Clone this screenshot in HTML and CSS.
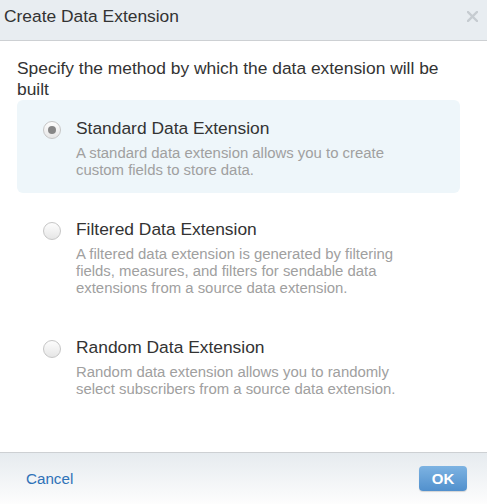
FILE: index.html
```html
<!DOCTYPE html>
<html lang="en">
<head>
    <meta charset="UTF-8">
    <meta name="viewport" content="width=device-width, initial-scale=1.0">
    <title>Create Data Extension</title>
    <link rel="stylesheet" href="styles.css">
</head>
<body>
    <div class="modal">
        <div class="modal-header">
            <h1 class="modal-title">Create Data Extension</h1>
            <span class="close">
                <svg width="11" height="11" viewBox="0 0 11 11">
                    <path d="M1 1 L10 10 M10 1 L1 10" stroke="#c6ccd1" stroke-width="2.4" stroke-linecap="square" fill="none"/>
                </svg>
            </span>
        </div>

        <div class="modal-body">
            <p class="intro">Specify the method by which the data extension will be built</p>

            <!-- Options -->
            <label class="option selected">
                <input type="radio" name="method" value="standard" checked>
                <span class="option-text">
                    <span class="option-label">Standard Data Extension</span>
                    <span class="option-desc">A standard data extension allows you to create custom fields to store data.</span>
                </span>
            </label>

            <label class="option">
                <input type="radio" name="method" value="filtered">
                <span class="option-text">
                    <span class="option-label">Filtered Data Extension</span>
                    <span class="option-desc">A filtered data extension is generated by filtering fields, measures, and filters for sendable data extensions from a source data extension.</span>
                </span>
            </label>

            <label class="option">
                <input type="radio" name="method" value="random">
                <span class="option-text">
                    <span class="option-label">Random Data Extension</span>
                    <span class="option-desc">Random data extension allows you to randomly select subscribers from a source data extension.</span>
                </span>
            </label>
        </div>

        <div class="modal-footer">
            <a class="cancel" href="#">Cancel</a>
            <button class="btn-ok">OK</button>
        </div>
    </div>
</body>
</html>
```

FILE: styles.css
```css
body {
    margin: 0;
    font-family: "Liberation Sans", Arial, sans-serif;
    background: #fff;
    color: #333;
}
.modal {
    width: 487px;
    height: 504px;
    display: flex;
    flex-direction: column;
}
.modal-header {
    height: 36px;
    padding: 4px 9px 0 4px;
    background: #e8edf1;
    border-bottom: 1px solid #cdd0d3;
    display: flex;
    justify-content: space-between;
    align-items: flex-start;
}
.modal-title {
    margin: 0;
    font-size: 17.4px;
    font-weight: normal;
    line-height: 24px;
    color: #333;
}
.close {
    margin-top: 7px;
    width: 11px;
    height: 11px;
    display: block;
}
.close svg {
    display: block;
}
.modal-body {
    flex: 1;
    padding: 17px 27px 0 17px;
}
.intro {
    margin: 0;
    font-size: 17.4px;
    line-height: 21px;
    color: #333;
}
.option {
    display: grid;
    grid-template-columns: 18px 1fr;
    column-gap: 15px;
    padding: 18px 50px 14px 26px;
    margin-bottom: 8px;
    border-radius: 6px;
    cursor: pointer;
}
.option.selected {
    background: #eef6fa;
}
.option input {
    appearance: none;
    -webkit-appearance: none;
    margin: 3px 0 0 0;
    width: 18px;
    height: 18px;
    border-radius: 50%;
    border: 1px solid #c6c6c6;
    background: linear-gradient(#fdfdfd, #e6e6e6);
    box-sizing: border-box;
    display: flex;
    align-items: center;
    justify-content: center;
}
.option input:checked::after {
    content: "";
    width: 8px;
    height: 8px;
    border-radius: 50%;
    background: #868686;
}
.option-text {
    display: flex;
    flex-direction: column;
}
.option-label {
    font-size: 17.4px;
    line-height: 20px;
    color: #333;
    margin-bottom: 7px;
}
.option-desc {
    font-size: 14.9px;
    line-height: 17px;
    color: #a0a0a0;
}
.modal-footer {
    height: 51px;
    border-top: 1px solid #cdd0d3;
    background: linear-gradient(#e6ebef, #fdfdfd);
    display: flex;
    justify-content: space-between;
    align-items: center;
    padding: 0 20px 0 26px;
}
.cancel {
    font-size: 15.2px;
    color: #2f72b8;
    text-decoration: none;
}
.btn-ok {
    width: 48px;
    height: 25px;
    border: none;
    border-radius: 4px;
    background: linear-gradient(#7db3e2, #5190cd);
    color: #fff;
    font-family: "Liberation Sans", Arial, sans-serif;
    font-size: 15px;
    font-weight: bold;
    padding: 0;
    box-shadow: 0 1px 1px rgba(0,0,0,0.15);
}
```
